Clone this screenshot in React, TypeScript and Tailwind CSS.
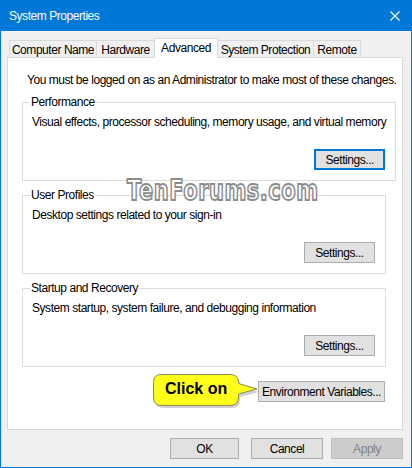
import React from "react";

function Btn({
  children,
  className = "",
  focused = false,
  disabled = false,
}: {
  children: React.ReactNode;
  className?: string;
  focused?: boolean;
  disabled?: boolean;
}) {
  const base = "h-[21px] flex items-center justify-center text-[12px] leading-[16px] whitespace-nowrap";
  const look = disabled
    ? "bg-[#cccccc] border border-[#bfbfbf] text-[#838383]"
    : focused
    ? "bg-[#e1e1e1] border-2 border-[#0078d7] text-black"
    : "bg-[#e1e1e1] border border-[#adadad] text-black";
  return <div className={`${base} ${look} ${className}`}>{children}</div>;
}

function Group({ title, desc, focused = false }: { title: string; desc: string; focused?: boolean }) {
  return (
    <fieldset className="border border-[#dcdcdc] px-[9px] pb-[10px]">
      <legend className="ml-[-2px] px-[1px] text-[12px] leading-[16px] whitespace-nowrap">{title}</legend>
      <div className="mt-[4px] text-[12px] leading-[16px] whitespace-nowrap">{desc}</div>
      <div className="mt-[19px] flex justify-end pr-[1px]">
        <Btn className="w-[71px]" focused={focused}>
          Settings...
        </Btn>
      </div>
    </fieldset>
  );
}

export default function App() {
  const tabs = [
    { label: "Computer Name", w: "w-[87px]", sel: false },
    { label: "Hardware", w: "w-[58px]", sel: false },
    { label: "Advanced", w: "w-[64px]", sel: true },
    { label: "System Protection", w: "w-[95px]", sel: false },
    { label: "Remote", w: "w-[48px]", sel: false },
  ];
  return (
    <div className="relative w-[412px] h-[468px] flex flex-col bg-[#0078d7] font-['Segoe_UI','Liberation_Sans',Arial,sans-serif] tracking-[-0.45px] text-black">
      {/* Title bar */}
      <div className="h-[31px] flex items-center justify-between pl-[9px] pr-[12px] text-white text-[12px] leading-[16px]">
        <span className="whitespace-nowrap">System Properties</span>
        <svg width="10" height="10" viewBox="0 0 10 10">
          <path d="M0.5 0.5 L9.5 9.5 M9.5 0.5 L0.5 9.5" stroke="white" strokeWidth="1.1" />
        </svg>
      </div>

      {/* Body */}
      <div className="flex-1 mx-[1px] mb-[1px] bg-[#f0f0f0] flex flex-col pl-[6px] pr-[8px] pt-[7px]">
        {/* Tabs */}
        <div className="flex items-end h-[19px] pl-[2px]">
          {tabs.map((t, i) => (
            <div
              key={t.label}
              className={
                t.sel
                  ? `${t.w} relative z-10 h-[20px] -mb-px bg-white border-t border-l border-r border-[#d9d9d9] flex items-start justify-center pt-[1px] text-[12px] leading-[16px] whitespace-nowrap`
                  : `${t.w} h-[17px] bg-[#f0f0f0] border-t ${i === 3 ? "" : "border-l"} ${
                      i === tabs.length - 1 ? "border-r" : ""
                    } border-[#d9d9d9] flex items-center justify-center text-[12px] leading-[16px] pt-[1px] whitespace-nowrap`
              }
            >
              {t.label}
            </div>
          ))}
        </div>

        {/* Panel */}
        <div className="h-[373px] bg-white border border-[#d9d9d9] flex flex-col pt-[14px] pl-[14px] pr-[16px]">
          <div className="ml-[5px] text-[12px] leading-[16px] whitespace-nowrap">
            You must be logged on as an Administrator to make most of these changes.
          </div>
          <div className="mt-[6px]">
            <Group title="Performance" desc="Visual effects, processor scheduling, memory usage, and virtual memory" focused />
          </div>
          <div className="mt-[6px]">
            <Group title="User Profiles" desc="Desktop settings related to your sign-in" />
          </div>
          <div className="mt-[6px]">
            <Group title="Startup and Recovery" desc="System startup, system failure, and debugging information" />
          </div>
          <div className="relative mt-[14px] flex justify-end pr-[1px]">
            <Btn className="w-[127px]">Environment Variables...</Btn>
            {/* Callout */}
            <div className="absolute right-[125px] top-[-11px] w-[112px] h-[40px] tracking-normal">
              <svg width="112" height="40" viewBox="0 0 112 40" className="absolute left-0 top-0">
                <path
                  d="M12 6 H81 Q89 6 89 14 V15 L108 21 L89 26 V29 Q89 37 81 37 H12 Q4 37 4 29 V14 Q4 6 12 6 Z"
                  fill="#000"
                  opacity="0.18"
                  transform="translate(2 1)"
                />
                <path
                  d="M12 4.5 H81 Q89.5 4.5 89.5 12.5 V13.5 L108 19 L89.5 24 V27 Q89.5 35.5 81 35.5 H12 Q4.5 35.5 4.5 27 V12.5 Q4.5 4.5 12 4.5 Z"
                  fill="#ffff1a"
                  stroke="#8a8a5a"
                  strokeWidth="1"
                />
              </svg>
              <span className="absolute left-[16px] top-[9px] text-[16px] leading-[20px] font-bold font-['Liberation_Sans',Arial,sans-serif] text-black whitespace-nowrap">
                Click on
              </span>
            </div>
          </div>
        </div>

        {/* Bottom buttons */}
        <div className="mt-[8px] flex justify-end">
          <Btn className="w-[69px]">OK</Btn>
          <Btn className="w-[72px] ml-[12px]">Cancel</Btn>
          <Btn className="w-[72px] ml-[8px]" disabled>
            Apply
          </Btn>
        </div>
      </div>

      {/* Watermark */}
      <div className="absolute left-[127px] top-[180px] pointer-events-none origin-top-left scale-y-[1.35] text-[21px] leading-[16px] font-bold font-['DejaVu_Sans',sans-serif] text-white [-webkit-text-stroke:1.4px_#8c8c8c] tracking-[0.5px] whitespace-nowrap">
        TenForums.com
      </div>
    </div>
  );
}
